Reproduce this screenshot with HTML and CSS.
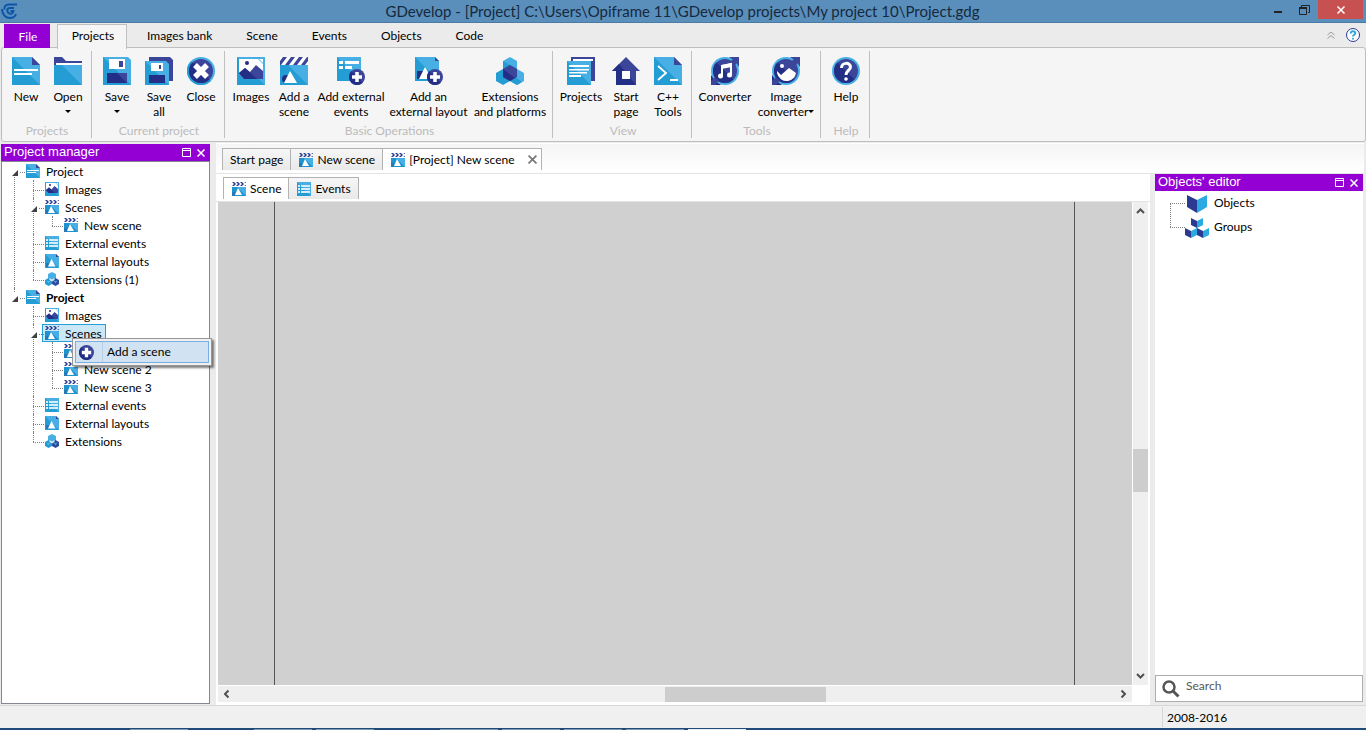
FILE: index.html
```html
<!DOCTYPE html>
<html lang="en">
<head>
  <meta charset="UTF-8">
  <meta name="viewport" content="width=device-width, initial-scale=1.0">
  <title>GDevelop - [Project]</title>
  <link rel="stylesheet" href="styles.css">
</head>
<body>

  <!-- icon set -->
  <svg class="defs" width="0" height="0" aria-hidden="true">
    <symbol id="i-logo" viewBox="0 0 18 16">
      <path d="M16 1.500H8C4.500 1.500 3 3.500 3.500 6.500M13 5H8.500C6.500 5 6 6.500 6.500 8.500 7 10.500 9 11 10.500 10.500 12 10 12.500 9 12.500 8H9.500M1 6c0 6 4 9 8 9 3 0 5-1 6-4" fill="none" stroke="#0d55a8" stroke-width="2"/>
    </symbol>
    <symbol id="i-page" viewBox="0 0 28 28">
      <path d="M0 0h20l8 8v20H0z" fill="#48afe5"/><path d="M0 0l28 28H0z" fill="#239dd3"/>
      <path d="M20 0v8h8z" fill="#3b4599"/>
      <path d="M2 12h24v2H2zM2 16h18v2H2z" fill="#fff"/>
    </symbol>
    <symbol id="i-folder" viewBox="0 0 28 28">
      <path d="M0 0h8l4 4h16v4H0z" fill="#3b4599"/><path d="M2 6h26v2H2z" fill="#fff"/>
      <path d="M0 8h28v20H0z" fill="#48afe5"/><path d="M0 8h8l20 20H0z" fill="#239dd3"/>
    </symbol>
    <symbol id="i-save" viewBox="0 0 28 28">
      <path d="M0 0h25l3 3v25H0z" fill="#48afe5"/><path d="M0 0l28 28H0z" fill="#239dd3"/>
      <path d="M6 2h16v10H6z" fill="#fff"/><path d="M16 4h4v6h-4z" fill="#3b4599"/><path d="M4 16h20v10H4z" fill="#232f86"/>
      <path d="M14 16h10v10z" fill="#3b4599"/>
    </symbol>
    <symbol id="i-saveall" viewBox="0 0 28 28">
      <path d="M4 0h21l3 3v21H4z" fill="#3b4599"/>
      <path d="M0 4h21l3 3v21H0z" fill="#48afe5"/><path d="M0 4l24 24H0z" fill="#239dd3"/>
      <path d="M6 6h12v8H6z" fill="#fff"/><path d="M14 8h2v4h-2z" fill="#3b4599"/><path d="M4 18h16v8H4z" fill="#232f86"/>
    </symbol>
    <symbol id="i-close" viewBox="0 0 28 28">
      <circle cx="14" cy="14" r="14" fill="#48afe5"/><path d="M4 4a14 14 0 0 0 20 20z" fill="#239dd3"/>
      <circle cx="14" cy="14" r="12" fill="#3b4599"/><path d="M5.500 5.500a12 12 0 0 0 17 17z" fill="#232f86"/>
      <path d="M8 8l12 12M20 8L8 20" stroke="#fff" stroke-width="5.500"/>
    </symbol>
    <symbol id="i-images" viewBox="0 0 28 28">
      <path d="M0 0h28v28H0z" fill="#48afe5"/><path d="M0 0l28 28H0z" fill="#239dd3"/>
      <path d="M2 2h19l5 5v15H7l-5-5z" fill="#fff"/>
      <path d="M22 2h4v4z" fill="#fff"/>
      <path d="M2 16l6-5 5 4 6-7 7 6v8H7l-5-5z" fill="#3b4599"/><path d="M2 16l6-5 12 11H7z" fill="#232f86"/>
      <circle cx="10" cy="6" r="2" fill="#232f86"/>
    </symbol>
    <symbol id="i-scene" viewBox="0 0 28 28">
      <path d="M0 0h28v8H0z" fill="#fff"/>
      <path d="M3 0h4L4 4H0zM11 0h4l-3 4H8zM19 0h4l-3 4h-4zM27 0h1v4h-4zM0 4h4l-3 4H0zM8 4h4l-3 4H5zM16 4h4l-3 4h-4zM24 4h4l-3 4h-4z" fill="#3b4599"/>
      <path d="M0 8h28v20H0z" fill="#48afe5"/><path d="M0 8h8l20 20H0z" fill="#239dd3"/>
      <circle cx="6" cy="22" r="4" fill="#232f86"/><path d="M10 14l7 12H4z" fill="#fff"/>
    </symbol>
    <symbol id="i-scene-small" viewBox="0 0 14 14">
      <path d="M0 0h2l2 2-2 2H0l2-2zM4 0h2l2 2-2 2H4l2-2zM8 0h2l2 2-2 2H8l2-2zM12 0h2v1zM12 4l2-1v1z" fill="#2b3990"/>
      <path d="M0 5h14v9H0z" fill="#48afe5"/><path d="M0 5h5l9 9H0z" fill="#1e93cd"/>
      <path d="M0 10h3v4H0z" fill="#2479b8"/><path d="M6 6l4 7H3z" fill="#fff"/>
    </symbol>
    <symbol id="i-table" viewBox="0 0 14 14">
      <path d="M0 0h14v14H0z" fill="#48afe5"/><path d="M0 0l14 14H0z" fill="#239dd3"/>
      <path d="M1 3h2v2H1zM4 3h9v2H4zM1 6h2v2H1zM4 6h9v2H4zM1 9h2v2H1zM4 9h9v2H4z" fill="#d6ecf8"/>
    </symbol>
    <symbol id="i-layout" viewBox="0 0 28 28">
      <path d="M0 0h22l6 6v22H0z" fill="#48afe5"/><path d="M0 0l28 28H0z" fill="#239dd3"/>
      <path d="M22 0v6h6z" fill="#3b4599"/><path d="M2 18h6v8H2z" fill="#2479b8"/><path d="M13 10l8 15H6z" fill="#fff"/>
    </symbol>
    <symbol id="i-addevents" viewBox="0 0 28 28">
      <path d="M0 0h24v24H0z" fill="#48afe5"/><path d="M0 0l24 24H0z" fill="#239dd3"/>
      <path d="M2 4h4v3H2zM8 4h14v3H8zM2 9h4v3H2zM8 9h7v3H8z" fill="#fff"/>
      <use href="#i-plus" x="12" y="12" width="16" height="16"/>
    </symbol>
    <symbol id="i-addlayout" viewBox="0 0 28 28">
      <path d="M0 0h20l4 4v20H0z" fill="#48afe5"/><path d="M0 0l24 24H0z" fill="#239dd3"/>
      <path d="M20 0v4h4z" fill="#3b4599"/><path d="M2 14h8v8H2z" fill="#232f86"/><path d="M10 10l7 12H4z" fill="#fff"/>
      <use href="#i-plus" x="12" y="12" width="16" height="16"/>
    </symbol>
    <symbol id="i-plus" viewBox="0 0 16 16">
      <circle cx="8" cy="8" r="8" fill="#3b4599"/><path d="M2.300 2.300a8 8 0 0 0 11.400 11.400z" fill="#232f86"/>
      <path d="M8 3v10M3 8h10" stroke="#fff" stroke-width="3.500"/>
    </symbol>
    <symbol id="i-ext" viewBox="0 0 28 28">
      <path d="M14 0l7 4v8l-7 4-7-4V4zM21 12l7 4v8l-7 4-7-4v-8z" fill="#48afe5"/>
      <path d="M7 12l7 4v8l-7 4-7-4v-8zM7 4l14 8-7 4-7-4zM14 24v-8l12 9-5 3z" fill="#239dd3"/>
      <path d="M14 8l7 4v8l-7 4-7-4v-8z" fill="#3b4599"/><path d="M7 12l12 9-5 3-7-4z" fill="#232f86"/>
    </symbol>
    <symbol id="i-ext-small" viewBox="0 0 28 28">
      <path d="M14 0l8 4v9l-8 4-8-4V4z" fill="#48afe5"/>
      <path d="M7 12l7 4v8l-7 4-7-4v-8z" fill="#239dd3"/><path d="M21 12l7 4v8l-7 4-7-4v-8z" fill="#2b4da0"/>
      <path d="M9 12l5 3 5-3v4l-5 3-5-3z" fill="#d6ecf8"/><path d="M3 17l4 2 4-2-4 5zM17 17l4 2 4-2-4 5z" fill="#6fc0ea"/>
    </symbol>
    <symbol id="i-projects" viewBox="0 0 28 28">
      <path d="M4 0h24v24H4z" fill="#3b4599"/><path d="M6 2h20v2H6z" fill="#fff"/>
      <path d="M0 4h24v24H0z" fill="#48afe5"/><path d="M0 4l24 24H0z" fill="#239dd3"/>
      <path d="M2 8h20v2H2zM2 12h20v1.500H2zM2 15h18v1.500H2zM2 18h12v2H2z" fill="#fff"/>
    </symbol>
    <symbol id="i-home" viewBox="0 0 28 28">
      <path d="M14 0l14 14h-4v14H4V14H0z" fill="#3b4599"/><path d="M14 0L0 14h4v14h20L7 7z" fill="#232f86"/>
      <path d="M10 14h8v8h-8z" fill="#fff"/>
    </symbol>
    <symbol id="i-cpp" viewBox="0 0 28 28">
      <path d="M0 0h20l8 8v20H0z" fill="#48afe5"/><path d="M0 0l28 28H0z" fill="#239dd3"/><path d="M20 0v8h8z" fill="#3b4599"/>
      <path d="M4 9l8 7-8 7M16 23h8" fill="none" stroke="#fff" stroke-width="1.800"/>
    </symbol>
    <symbol id="i-disc" viewBox="0 0 28 28">
      <path d="M18 0h10v10z" fill="#3b4599"/><path d="M0 18v10h10z" fill="#232f86"/>
      <circle cx="14" cy="14" r="14" fill="#48afe5"/><circle cx="14" cy="14" r="12" fill="#3b4599"/>
      <path d="M5.500 5.500a12 12 0 0 0 17 17z" fill="#232f86"/>
      <path d="M20 4l4-4h4v4l-4 4zM0 24l4-4 4 4-4 4H0z" fill="#3b4599"/>
    </symbol>
    <symbol id="i-music" viewBox="0 0 28 28">
      <use href="#i-disc"/>
      <path d="M11 19V9l9-2v11" fill="none" stroke="#fff" stroke-width="2"/><path d="M10 8l11-2v4l-11 2z" fill="#fff"/>
      <circle cx="9.500" cy="19" r="2.500" fill="#fff"/><circle cx="18.500" cy="18" r="2.500" fill="#fff"/>
    </symbol>
    <symbol id="i-imgconv" viewBox="0 0 28 28">
      <use href="#i-disc"/>
      <path d="M5 14l4 4 8-7 7 5a10 10 0 0 1-8 8 10 10 0 0 1-11-8z" fill="#fff"/><circle cx="10" cy="9" r="2" fill="#fff"/>
    </symbol>
    <symbol id="i-help" viewBox="0 0 28 28">
      <circle cx="14" cy="14" r="14" fill="#48afe5"/><circle cx="14" cy="14" r="12" fill="#3b4599"/>
      <path d="M5.500 5.500a12 12 0 0 0 17 17z" fill="#232f86"/>
      <path d="M9.500 11c0-6 9-6 9-1 0 3.500-4.500 3.500-4.500 8" fill="none" stroke="#fff" stroke-width="3"/><circle cx="14" cy="22" r="1.800" fill="#fff"/>
    </symbol>
    <symbol id="i-objects" viewBox="0 0 24 20">
      <path d="M2 1l10 5v13L2 13z" fill="#2b3990"/><path d="M22 1l-10 5v13l10-6z" fill="#29aae2"/>
    </symbol>
    <symbol id="i-groups" viewBox="0 0 24 20">
      <path d="M6 0l6 3v7L6 7zM0 10l6 3v7l-6-3zM12 10l6 3v7l-6-3z" fill="#2b3990"/>
      <path d="M18 0l-6 3v7l6-3zM12 10l-6 3v7l6-3zM24 10l-6 3v7l6-3z" fill="#29aae2"/>
    </symbol>
    <symbol id="i-expand" viewBox="0 0 6 6"><path d="M6 0v6H0z" fill="#404040"/></symbol>
    <symbol id="i-maximize" viewBox="0 0 9 9"><path d="M.5.5h8v8h-8zM0 2.500h9" fill="none" stroke="#fff"/></symbol>
    <symbol id="i-x" viewBox="0 0 8 8"><path d="M.5.5l7 7M7.500.5l-7 7" stroke="currentColor" stroke-width="1.500"/></symbol>
    <symbol id="i-arrow" viewBox="0 0 9 6"><path d="M1 5l3.500-3.500L8 5" fill="none" stroke="#505050" stroke-width="2"/></symbol>
    <symbol id="i-search" viewBox="0 0 18 18"><circle cx="7" cy="7" r="5.500" fill="none" stroke="#555" stroke-width="2.500"/><path d="M11 11l5.500 5.500" stroke="#555" stroke-width="3"/></symbol>
  </svg>

  <header class="titlebar">
    <svg class="logo"><use href="#i-logo"/></svg>
    <h1>GDevelop - [Project] C:\Users\Opiframe 11\GDevelop projects\My project 10\Project.gdg</h1>
    <div class="window-buttons">
      <button class="minimize" aria-label="Minimize"><svg width="8" height="2"><path d="M0 0h8v2H0z" fill="#222"/></svg></button>
      <button class="restore" aria-label="Restore"><svg width="11" height="10"><path d="M2.500 2V.5h8v7H9M.5 3h7v6.500h-7z" fill="none" stroke="#222"/><path d="M0 2h8v2H0z" fill="#222"/></svg></button>
      <button class="close" aria-label="Close"><svg width="8" height="8"><use href="#i-x"/></svg></button>
    </div>
  </header>

  <nav class="ribbon-tabs">
    <button class="file">File</button>
    <button class="active">Projects</button>
    <button>Images bank</button>
    <button>Scene</button>
    <button>Events</button>
    <button>Objects</button>
    <button>Code</button>
    <div class="ribbon-tools">
      <button aria-label="Collapse"><svg width="8" height="8"><path d="M.5 4L4 1l3.500 3M.5 7.500L4 4.500l3.500 3" fill="none" stroke="#999"/></svg></button>
      <button aria-label="About"><svg width="14" height="14" viewBox="0 0 28 28"><circle cx="14" cy="14" r="13" fill="#fff" stroke="#2b3990" stroke-width="2"/><path d="M9.500 11c0-6 9-6 9-1 0 3.500-4.500 3.500-4.500 7" fill="none" stroke="#29aae2" stroke-width="4"/><circle cx="14" cy="21.500" r="2" fill="#29aae2"/></svg></button>
    </div>
  </nav>

  <section class="ribbon">
    <div class="group">
      <div class="tools">
        <button><svg><use href="#i-page"/></svg>New</button>
        <button><svg><use href="#i-folder"/></svg>Open<i class="caret"></i></button>
      </div>
      <h2>Projects</h2>
    </div>
    <div class="group">
      <div class="tools">
        <button><svg><use href="#i-save"/></svg>Save<i class="caret"></i></button>
        <button><svg><use href="#i-saveall"/></svg>Save<br>all</button>
        <button><svg><use href="#i-close"/></svg>Close</button>
      </div>
      <h2>Current project</h2>
    </div>
    <div class="group">
      <div class="tools">
        <button class="w-44"><svg><use href="#i-images"/></svg>Images</button>
        <button><svg><use href="#i-scene"/></svg>Add a<br>scene</button>
        <button class="w-72"><svg><use href="#i-addevents"/></svg>Add external<br>events</button>
        <button class="w-83"><svg><use href="#i-addlayout"/></svg>Add an<br>external layout</button>
        <button class="w-80"><svg><use href="#i-ext"/></svg>Extensions<br>and platforms</button>
      </div>
      <h2>Basic Operations</h2>
    </div>
    <div class="group">
      <div class="tools">
        <button class="w-48"><svg><use href="#i-projects"/></svg>Projects</button>
        <button><svg><use href="#i-home"/></svg>Start<br>page</button>
        <button><svg><use href="#i-cpp"/></svg>C++<br>Tools</button>
      </div>
      <h2>View</h2>
    </div>
    <div class="group">
      <div class="tools">
        <button class="w-58"><svg><use href="#i-music"/></svg>Converter</button>
        <button class="w-64"><svg><use href="#i-imgconv"/></svg>Image<span class="with-caret">converter<i class="caret"></i></span></button>
      </div>
      <h2>Tools</h2>
    </div>
    <div class="group">
      <div class="tools">
        <button><svg><use href="#i-help"/></svg>Help</button>
      </div>
      <h2>Help</h2>
    </div>
  </section>

  <main>
    <aside class="manager">
      <div class="panel-title">
        <h2>Project manager</h2>
        <button aria-label="Maximize"><svg width="9" height="9"><use href="#i-maximize"/></svg></button>
        <button aria-label="Close"><svg width="8" height="8"><use href="#i-x"/></svg></button>
      </div>
      <ul class="tree">
        <li>
          <div class="row"><button class="toggle" aria-label="Collapse"><svg><use href="#i-expand"/></svg></button><svg class="icon"><use href="#i-page"/></svg>Project</div>
          <ul>
            <li><div class="row"><svg class="icon"><use href="#i-images"/></svg>Images</div></li>
            <li>
              <div class="row"><button class="toggle" aria-label="Collapse"><svg><use href="#i-expand"/></svg></button><svg class="icon"><use href="#i-scene-small"/></svg>Scenes</div>
              <ul>
                <li><div class="row"><svg class="icon"><use href="#i-scene-small"/></svg>New scene</div></li>
              </ul>
            </li>
            <li><div class="row"><svg class="icon"><use href="#i-table"/></svg>External events</div></li>
            <li><div class="row"><svg class="icon"><use href="#i-layout"/></svg>External layouts</div></li>
            <li><div class="row"><svg class="icon"><use href="#i-ext-small"/></svg>Extensions (1)</div></li>
          </ul>
        </li>
        <li>
          <div class="row current"><button class="toggle" aria-label="Collapse"><svg><use href="#i-expand"/></svg></button><svg class="icon"><use href="#i-page"/></svg>Project</div>
          <ul>
            <li><div class="row"><svg class="icon"><use href="#i-images"/></svg>Images</div></li>
            <li>
              <div class="row"><button class="toggle" aria-label="Collapse"><svg><use href="#i-expand"/></svg></button><span class="selected"><svg class="icon"><use href="#i-scene-small"/></svg>Scenes</span></div>
              <ul>
                <li><div class="row"><svg class="icon"><use href="#i-scene-small"/></svg></div></li>
                <li><div class="row"><svg class="icon"><use href="#i-scene-small"/></svg>New scene 2</div></li>
                <li><div class="row"><svg class="icon"><use href="#i-scene-small"/></svg>New scene 3</div></li>
              </ul>
              <div class="context-menu">
                <button><svg><use href="#i-plus"/></svg><span>Add a scene</span></button>
              </div>
            </li>
            <li><div class="row"><svg class="icon"><use href="#i-table"/></svg>External events</div></li>
            <li><div class="row"><svg class="icon"><use href="#i-layout"/></svg>External layouts</div></li>
            <li><div class="row"><svg class="icon"><use href="#i-ext-small"/></svg>Extensions</div></li>
          </ul>
        </li>
      </ul>
    </aside>

    <div class="workspace">
      <div class="tabs documents">
        <button>Start page</button>
        <button><svg class="icon"><use href="#i-scene-small"/></svg>New scene</button>
        <button class="active"><svg class="icon"><use href="#i-scene-small"/></svg>[Project] New scene<svg class="tab-close"><use href="#i-x"/></svg></button>
      </div>
      <div class="panes">
        <section class="editor">
          <div class="tabs views">
            <button class="active"><svg class="icon"><use href="#i-scene-small"/></svg>Scene</button>
            <button><svg class="icon"><use href="#i-table"/></svg>Events</button>
          </div>
          <div class="canvas-grid">
            <div class="canvas"><div class="frame"></div></div>
            <div class="scroll vertical">
              <svg class="arrow"><use href="#i-arrow"/></svg>
              <div class="before"></div><div class="thumb"></div><div class="after"></div>
              <svg class="arrow down"><use href="#i-arrow"/></svg>
            </div>
            <div class="scroll horizontal">
              <svg class="arrow left"><use href="#i-arrow"/></svg>
              <div class="before"></div><div class="thumb"></div><div class="after"></div>
              <svg class="arrow right"><use href="#i-arrow"/></svg>
            </div>
          </div>
        </section>

        <aside class="objects">
          <div class="panel-title">
            <h2>Objects' editor</h2>
            <button aria-label="Maximize"><svg width="9" height="9"><use href="#i-maximize"/></svg></button>
            <button aria-label="Close"><svg width="8" height="8"><use href="#i-x"/></svg></button>
          </div>
          <ul class="object-tree">
            <li><svg><use href="#i-objects"/></svg><span>Objects</span></li>
            <li><svg><use href="#i-groups"/></svg><span>Groups</span></li>
          </ul>
          <label class="search">
            <svg><use href="#i-search"/></svg>
            <input type="text" placeholder="Search" aria-label="Search">
          </label>
        </aside>
      </div>
    </div>
  </main>

  <footer class="statusbar"><span>2008-2016</span></footer>
  <div class="taskbar">
    <i></i><i class="empty"></i><i></i><i></i><i class="empty"></i>
    <i></i><i></i><i></i><i></i><i class="front"></i>
  </div>

</body>
</html>
```
FILE: styles.css
```css
* {
  box-sizing: border-box;
}

body {
  margin: 0;
  height: 100vh;
  display: flex;
  flex-direction: column;
  background: #ebebeb;
  color: #000;
  font: 12px/15px Lato, "Open Sans", sans-serif;
  overflow: hidden;
}

h1, h2, ul {
  margin: 0;
  padding: 0;
  font-weight: normal;
  list-style: none;
}

button {
  font: inherit;
  color: inherit;
  background: none;
  border: none;
  padding: 0;
  white-space: nowrap;
}

svg {
  flex: none;
}

.defs {
  position: absolute;
}

/* title bar */
.titlebar {
  display: flex;
  flex: none;
  height: 23px;
  background: #5a8fbc;
  border-bottom: 1px solid #4b7aa5;
}

.titlebar .logo {
  width: 18px;
  height: 16px;
  margin: 3px 0 0 1px;
}

.titlebar h1 {
  flex: 1;
  padding-left: 82px;
  font-size: 15px;
  line-height: 23px;
  color: #16293c;
  text-align: center;
  white-space: nowrap;
}

.window-buttons {
  display: flex;
  height: 19px;
  margin-right: 3px;
}

.window-buttons button {
  display: flex;
  align-items: center;
  justify-content: center;
  width: 27px;
}

.window-buttons .close {
  width: 45px;
  background: #c75050;
  color: #fff;
}

.window-buttons .minimize {
  padding-top: 5px;
}

/* ribbon */
.ribbon-tabs {
  display: flex;
  flex: none;
  height: 25px;
  padding: 1px 6px 0 4px;
  position: relative;
}

.ribbon-tabs button {
  padding: 0 17px 2px;
}

.ribbon-tabs .file {
  width: 46px;
  padding: 0 0 0 2px;
  margin-right: 7px;
  background: #9400d3;
  color: #fff;
}

.ribbon-tabs .active {
  width: 70px;
  height: 25px;
  padding: 0 0 3px 2px;
  margin-right: 3px;
  background: #f5f5f5;
  border: 1px solid #c0c0c0;
  border-bottom: none;
  z-index: 1;
}

.ribbon-tools {
  display: flex;
  align-items: center;
  gap: 11px;
  margin-left: auto;
}

.ribbon-tools button {
  padding: 0 0 2px;
  display: flex;
}

.ribbon {
  display: flex;
  flex: none;
  height: 95px;
  margin: -1px 0 1px 1px;
  padding: 3px 0;
  background: #f5f5f5;
  border: 1px solid #bebebe;
  border-radius: 3px;
}

.group {
  display: flex;
  flex-direction: column;
  padding: 0 2px 0 4px;
  border-right: 1px solid #c0c0c0;
}

.group:first-child {
  padding-left: 3px;
}

.tools {
  display: flex;
  flex: 1;
}

.tools button {
  display: flex;
  flex-direction: column;
  align-items: center;
  width: 42px;
  padding-top: 6px;
}

.tools button.w-44 { width: 44px; }
.tools button.w-48 { width: 48px; }
.tools button.w-58 { width: 58px; }
.tools button.w-64 { width: 64px; }
.tools button.w-72 { width: 72px; }
.tools button.w-80 { width: 80px; }
.tools button.w-83 { width: 83px; }

.tools svg {
  width: 28px;
  height: 28px;
  margin-bottom: 4px;
}

.caret {
  border: 3px solid transparent;
  border-top-color: #000;
  border-bottom: none;
  margin-top: 6px;
}

.with-caret {
  display: flex;
}

.group h2 {
  font-size: 12px;
  line-height: 14px;
  text-align: center;
  color: #bbb;
}

/* panels */
main {
  display: flex;
  flex: 1;
  min-height: 0;
}

.manager {
  display: flex;
  flex-direction: column;
  width: 209px;
  margin: 1px 6px 1px 1px;
}

.panel-title {
  display: flex;
  align-items: center;
  gap: 6px;
  height: 17px;
  padding: 0 5px 0 3px;
  background: #9400d3;
  color: #fff;
}

.panel-title h2 {
  flex: 1;
  font: 13px/15px "Liberation Sans", Arial, sans-serif;
  padding-bottom: 2px;
}

.panel-title button {
  display: flex;
}

.tree {
  flex: 1;
  padding-left: 3px;
  background: #fff;
  border: 1px solid #828790;
}

.tree ul {
  padding-left: 19px;
}

.tree li {
  position: relative;
}

/* dotted guide lines */
.tree li::before,
.tree li::after {
  content: "";
  position: absolute;
  left: 9px;
}

.tree li::before {
  top: 10px;
  width: 11px;
  border-top: 1px dotted #808080;
}

.tree li::after {
  top: 0;
  bottom: 0;
  border-left: 1px dotted #808080;
}

.tree li:last-child::after {
  bottom: auto;
  height: 10px;
}

.tree > li:first-child::after {
  top: 10px;
}

.row {
  display: flex;
  align-items: center;
  height: 18px;
  padding-left: 21px;
  white-space: nowrap;
}

.current {
  font-weight: bold;
}

.icon {
  width: 14px;
  height: 14px;
  margin-right: 6px;
}

.toggle {
  position: absolute;
  left: 7px;
  top: 4px;
  width: 8px;
  height: 11px;
  background: #fff;
  z-index: 1;
}

.toggle svg {
  display: block;
  width: 6px;
  height: 6px;
  margin-top: 2px;
}

.selected {
  display: flex;
  align-items: center;
  height: 18px;
  margin-left: -3px;
  padding: 0 3px 0 2px;
  background: #cbe8f6;
  border: 1px solid #26a0da;
}

.context-menu {
  position: absolute;
  left: 48px;
  top: 14px;
  width: 140px;
  padding: 2px;
  background: #f0f0f0;
  border: 1px solid #979797;
  box-shadow: 2px 2px 2px rgba(0, 0, 0, 0.5);
  z-index: 2;
}

.context-menu button {
  display: flex;
  align-items: center;
  width: 100%;
  height: 22px;
  padding-left: 3px;
  background: #d1e2f2;
  border: 1px solid #78aee5;
}

.context-menu svg {
  width: 15px;
  height: 15px;
  margin-right: 8px;
}

.context-menu span {
  padding: 2px 0 3px 4px;
  border-left: 1px solid #b8cfe5;
}

/* workspace */
.workspace {
  display: flex;
  flex: 1;
  flex-direction: column;
  min-width: 0;
}

.tabs {
  display: flex;
  flex: none;
  background: #fff;
  border-bottom: 1px solid #e3e3e3;
}

.tabs button {
  display: flex;
  align-items: center;
  height: 22px;
  margin-left: -1px;
  padding: 0 7px;
  background: linear-gradient(#f6f6f6, #e9e9e9);
  border: 1px solid #b2b2b2;
  border-bottom: none;
}

.tabs button.active {
  background: #fff;
}

.tabs .icon {
  margin: 0 4px 0 1px;
}

.documents {
  height: 31px;
  margin-right: 2px;
  padding: 4px 0 0 7px;
  background: linear-gradient(#f5f5f5, #fff);
  border-top: 1px solid #fff;
}

.documents button.active {
  padding-right: 4px;
}

.tab-close {
  width: 9px;
  height: 9px;
  margin-left: 13px;
  color: #777;
}

.panes {
  display: flex;
  flex: 1;
  min-height: 0;
}

.editor {
  display: flex;
  flex: 1;
  flex-direction: column;
  min-width: 0;
  background: #fff;
}

.views {
  height: 28px;
  padding: 3px 0 0 8px;
}

.canvas-grid {
  display: grid;
  flex: 1;
  grid-template-columns: 1fr 15px;
  grid-template-rows: 1fr 16px;
  gap: 1px;
  margin: 0 2px 3px;
  min-height: 0;
}

.canvas {
  padding-right: 1px;
  background: #d0d0d0;
  overflow: hidden;
}

.frame {
  width: 801px;
  height: 100%;
  margin: 0 auto;
  border: solid #555;
  border-width: 0 1px;
}

.scroll {
  display: flex;
  align-items: center;
  background: #efefef;
}

.vertical {
  flex-direction: column;
}

.thumb {
  background: #cdcdcd;
}

.vertical .thumb {
  width: 15px;
  height: 43px;
}

.horizontal .thumb {
  width: 161px;
  height: 15px;
}

.vertical .before { flex: 230; }
.vertical .after { flex: 176; }
.horizontal .before { flex: 430; }
.horizontal .after { flex: 289; }

.arrow {
  width: 9px;
  height: 6px;
  margin: 6px 4px;
}

.down { transform: rotate(180deg); }
.left { transform: rotate(-90deg); }
.right { transform: rotate(90deg); }

/* objects' editor */
.objects {
  display: flex;
  flex-direction: column;
  width: 208px;
  margin: 0 3px 3px 5px;
  background: #fff;
}

.object-tree {
  flex: 1;
  padding: 0 0 0 15px;
}

.object-tree li {
  display: flex;
  align-items: center;
  height: 24px;
  position: relative;
}

.object-tree li::before {
  content: "";
  width: 15px;
  border-top: 1px dotted #808080;
}

.object-tree li:first-child::after {
  content: "";
  position: absolute;
  top: 12px;
  height: 24px;
  border-left: 1px dotted #808080;
}

.object-tree svg {
  width: 24px;
  height: 20px;
  margin: 2px 5px 0 0;
}

.object-tree span {
  padding-bottom: 2px;
}

.search {
  display: flex;
  align-items: center;
  height: 27px;
  padding-left: 6px;
  border: 1px solid #abadb3;
}

.search svg {
  width: 18px;
  height: 18px;
}

.search input {
  flex: 1;
  min-width: 0;
  height: 100%;
  padding: 0 6px 7px;
  font: inherit;
  border: none;
  outline: none;
  background: none;
}

.search input::placeholder {
  color: #555;
}

/* bottom */
.statusbar {
  display: flex;
  flex: none;
  height: 23px;
  justify-content: flex-end;
  background: #f0f0f0;
  border-top: 1px solid #d7d7d7;
}

.statusbar span {
  width: 204px;
  margin: 1px 0;
  padding: 3px 4px;
  border-left: 1px solid #d7d7d7;
}

.taskbar {
  display: flex;
  flex: none;
  gap: 4px;
  height: 2px;
  padding: 1px 0 0 130px;
  background: #204a78;
}

.taskbar i {
  width: 58px;
  background: #7f9dbb;
}

.taskbar .empty {
  background: none;
}

.taskbar .front {
  background: #e8eef4;
}
```
